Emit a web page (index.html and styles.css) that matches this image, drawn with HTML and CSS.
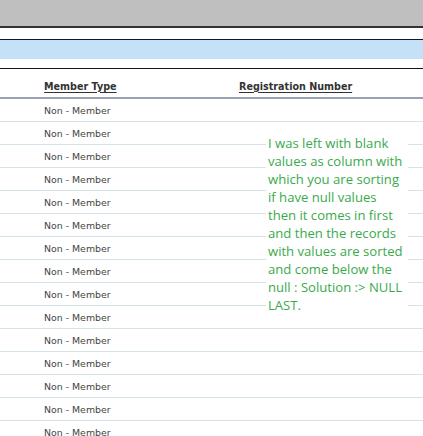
FILE: index.html
```html
<!DOCTYPE html>
<html>
<head>
<meta charset="utf-8">
<link rel="stylesheet" href="styles.css">
</head>
<body>
<div class="page">
  <div class="topbar"></div>
  <div class="band"></div>
  <div class="table">
    <div class="row head">
      <span class="c1"><u>Member Type</u></span>
      <span class="c2"><u>Registration Number</u></span>
    </div>
    <div class="row"><span class="c1">Non - Member</span><span class="c2"></span></div>
    <div class="row"><span class="c1">Non - Member</span><span class="c2"></span></div>
    <div class="row"><span class="c1">Non - Member</span><span class="c2"></span></div>
    <div class="row"><span class="c1">Non - Member</span><span class="c2"></span></div>
    <div class="row"><span class="c1">Non - Member</span><span class="c2"></span></div>
    <div class="row"><span class="c1">Non - Member</span><span class="c2"></span></div>
    <div class="row"><span class="c1">Non - Member</span><span class="c2"></span></div>
    <div class="row"><span class="c1">Non - Member</span><span class="c2"></span></div>
    <div class="row"><span class="c1">Non - Member</span><span class="c2"></span></div>
    <div class="row"><span class="c1">Non - Member</span><span class="c2"></span></div>
    <div class="row"><span class="c1">Non - Member</span><span class="c2"></span></div>
    <div class="row"><span class="c1">Non - Member</span><span class="c2"></span></div>
    <div class="row"><span class="c1">Non - Member</span><span class="c2"></span></div>
    <div class="row"><span class="c1">Non - Member</span><span class="c2"></span></div>
    <div class="row"><span class="c1">Non - Member</span><span class="c2"></span></div>
  </div>
  <div class="note">I was left with blank<br>values as column with<br>which you are sorting<br>if have null values<br>then it comes in first<br>and then the records<br>with values are sorted<br>and come below the<br>null : Solution :&gt; NULL<br>LAST.</div>
</div>
</body>
</html>
```
FILE: styles.css
```css
html, body {
  margin: 0;
  padding: 0;
  background: #ffffff;
  overflow: hidden;
}
.page {
  position: relative;
  width: 423px;
  height: 436px;
  overflow: hidden;
}
.topbar {
  height: 26px;
  background: #bfbfbf;
  border-bottom: 2px solid #333333;
  margin-bottom: 11px;
}
.band {
  height: 19px;
  background: #c4e1f8;
  border-top: 1px solid #0d1a33;
  margin-bottom: 9px;
}
.table {
  border-top: 1px solid #101828;
}
.row {
  display: grid;
  grid-template-columns: 195px 1fr;
  padding-left: 44px;
  height: 22px;
  align-items: center;
  border-bottom: 1px solid #d3e3e8;
  font-family: "DejaVu Sans", sans-serif;
  font-size: 9.4px;
  color: #444444;
}
.row.head {
  border-bottom: 2px solid #99a2b3;
  font-weight: bold;
  font-size: 9.6px;
  color: #333333;
  padding-top: 6px;
  box-sizing: border-box;
  height: 30px;
}
.row.head u {
  text-decoration-thickness: 1px;
  text-underline-offset: 2px;
}
.note {
  position: absolute;
  left: 266px;
  top: 134px;
  width: 140px;
  height: 182px;
  padding-left: 2px;
  background: #ffffff;
  font-family: "Open Sans", sans-serif;
  font-size: 13.1px;
  line-height: 18px;
  white-space: nowrap;
  color: #3aaa4c;
}
```
